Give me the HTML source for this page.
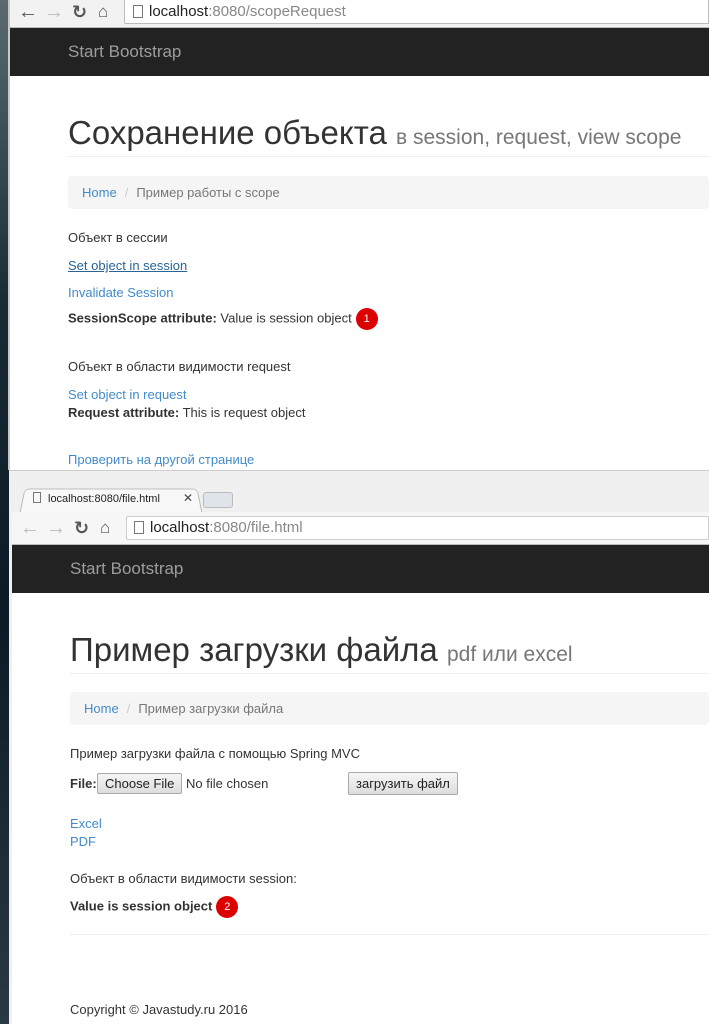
<!DOCTYPE html>
<html><head><meta charset="utf-8"><style>
*{margin:0;padding:0;box-sizing:border-box}
body{width:709px;height:1024px;overflow:hidden;position:relative;background:#fff;font-family:"Liberation Sans","DejaVu Sans",sans-serif;font-size:13px;color:#333}
.a{position:absolute;white-space:nowrap}
.lnk{color:#428bca}
.badge{display:inline-block;width:22px;height:22px;border-radius:50%;background:#d00;color:#fff;font-size:11px;text-align:center;line-height:22px;vertical-align:middle;margin-left:4px}
.btn{border:1px solid #aaa;border-radius:2px;background:linear-gradient(#f6f6f6,#ddd);padding:2px 7px;font-size:13px;color:#222}
.ar{font-size:20px;font-weight:bold;line-height:20px}
</style></head><body>
<div class="a" style="left:0;top:0;width:9px;height:1024px;background:linear-gradient(#5a6a70,#1a2a35 30%,#0b1a26 60%,#2a3a44)"></div>
<div class="a" style="left:8px;top:0;width:2px;height:470px;background:#c8c8c8"></div>
<div class="a" style="left:10px;top:0;width:699px;height:28px;background:#f2f2f2;border-bottom:1px solid #bbb"></div>
<div class="a ar" style="left:18px;top:2px;color:#555">&#8592;</div>
<div class="a ar" style="left:44px;top:2px;color:#bbb">&#8594;</div>
<div class="a ar" style="left:72px;top:2px;font-size:18px;color:#555">&#8635;</div>
<div class="a" style="left:98px;top:2px;font-size:17px;color:#555">&#8962;</div>
<div class="a" style="left:124px;top:0;width:585px;height:24px;background:#fff;border:1px solid #bbb;border-top:none;border-radius:0 0 0 2px"></div>
<div class="a" style="left:133px;top:5px;width:10px;height:13px;border:1px solid #777"></div>
<div class="a" style="left:149px;top:3px;font-size:15px;color:#222">localhost<span style="color:#888">:8080/scopeRequest</span></div>
<div class="a" style="left:10px;top:28px;width:699px;height:48px;background:#222"></div>
<div class="a" style="left:68px;top:42px;font-size:17px;color:#9d9d9d">Start Bootstrap</div>
<div class="a" style="left:68px;top:114px;font-size:33px;color:#333">Сохранение объекта <span style="font-size:21px;color:#777">в session, request, view scope</span></div>
<div class="a" style="left:68px;top:156px;width:641px;height:1px;background:#eee"></div>
<div class="a" style="left:68px;top:176px;width:641px;height:33px;background:#f5f5f5;border-radius:4px"></div>
<div class="a" style="left:82px;top:185px"><span class="lnk">Home</span><span style="color:#ccc;padding:0 8px">/</span><span style="color:#777">Пример работы с scope</span></div>
<div class="a" style="left:68px;top:230px">Объект в сессии</div>
<div class="a lnk" style="left:68px;top:258px;color:#2a6496;text-decoration:underline">Set object in session</div>
<div class="a lnk" style="left:68px;top:285px">Invalidate Session</div>
<div class="a" style="left:68px;top:308px"><b>SessionScope attribute:</b> Value is session object<span class="badge">1</span></div>
<div class="a" style="left:68px;top:359px">Объект в области видимости request</div>
<div class="a lnk" style="left:68px;top:387px">Set object in request</div>
<div class="a" style="left:68px;top:405px"><b>Request attribute:</b> This is request object</div>
<div class="a lnk" style="left:68px;top:452px">Проверить на другой странице</div>
<div class="a" style="left:9px;top:470px;width:700px;height:554px;background:#f0f0f0;border-top:1px solid #ccc"></div>
<div class="a" style="left:22px;top:488px;width:178px;height:26px;background:#f8f8f8;border:1px solid #bbb;border-bottom:none;border-radius:5px 5px 0 0;transform:perspective(60px) rotateX(8deg)"></div>
<div class="a" style="left:33px;top:492px;width:8px;height:11px;border:1px solid #777"></div>
<div class="a" style="left:48px;top:493px;font-size:11px;color:#222">localhost:8080/file.html</div>
<div class="a" style="left:183px;top:491px;font-size:12px;color:#444">&#10005;</div>
<div class="a" style="left:203px;top:492px;width:30px;height:16px;background:#dfe3ea;border:1px solid #bbb;border-radius:3px"></div>
<div class="a" style="left:12px;top:512px;width:697px;height:33px;background:#f6f6f6;border-bottom:1px solid #bbb"></div>
<div class="a ar" style="left:20px;top:518px;color:#bbb">&#8592;</div>
<div class="a ar" style="left:46px;top:518px;color:#bbb">&#8594;</div>
<div class="a ar" style="left:74px;top:518px;font-size:18px;color:#555">&#8635;</div>
<div class="a" style="left:100px;top:518px;font-size:17px;color:#555">&#8962;</div>
<div class="a" style="left:126px;top:516px;width:583px;height:24px;background:#fff;border:1px solid #ccc;border-radius:2px"></div>
<div class="a" style="left:134px;top:521px;width:10px;height:13px;border:1px solid #777"></div>
<div class="a" style="left:150px;top:519px;font-size:15px;color:#222">localhost<span style="color:#888">:8080/file.html</span></div>
<div class="a" style="left:12px;top:545px;width:697px;height:48px;background:#222"></div>
<div class="a" style="left:70px;top:559px;font-size:17px;color:#9d9d9d">Start Bootstrap</div>
<div class="a" style="left:12px;top:593px;width:697px;height:431px;background:#fff"></div>
<div class="a" style="left:70px;top:631px;font-size:33px;color:#333">Пример загрузки файла <span style="font-size:21px;color:#777">pdf или excel</span></div>
<div class="a" style="left:70px;top:673px;width:639px;height:1px;background:#eee"></div>
<div class="a" style="left:70px;top:692px;width:639px;height:33px;background:#f5f5f5;border-radius:4px"></div>
<div class="a" style="left:84px;top:701px"><span class="lnk">Home</span><span style="color:#ccc;padding:0 8px">/</span><span style="color:#777">Пример загрузки файла</span></div>
<div class="a" style="left:70px;top:746px">Пример загрузки файла с помощью Spring MVC</div>
<div class="a" style="left:70px;top:776px"><b>File:</b></div>
<div class="a btn" style="left:97px;top:773px">Choose File</div>
<div class="a" style="left:186px;top:776px">No file chosen</div>
<div class="a btn" style="left:348px;top:772px;padding:3px 7px">загрузить файл</div>
<div class="a lnk" style="left:70px;top:816px">Excel</div>
<div class="a lnk" style="left:70px;top:834px">PDF</div>
<div class="a" style="left:70px;top:871px">Объект в области видимости session:</div>
<div class="a" style="left:70px;top:896px"><b>Value is session object</b><span class="badge">2</span></div>
<div class="a" style="left:70px;top:934px;width:639px;height:1px;background:#eee"></div>
<div class="a" style="left:70px;top:1002px">Copyright © Javastudy.ru 2016</div>
</body></html>
